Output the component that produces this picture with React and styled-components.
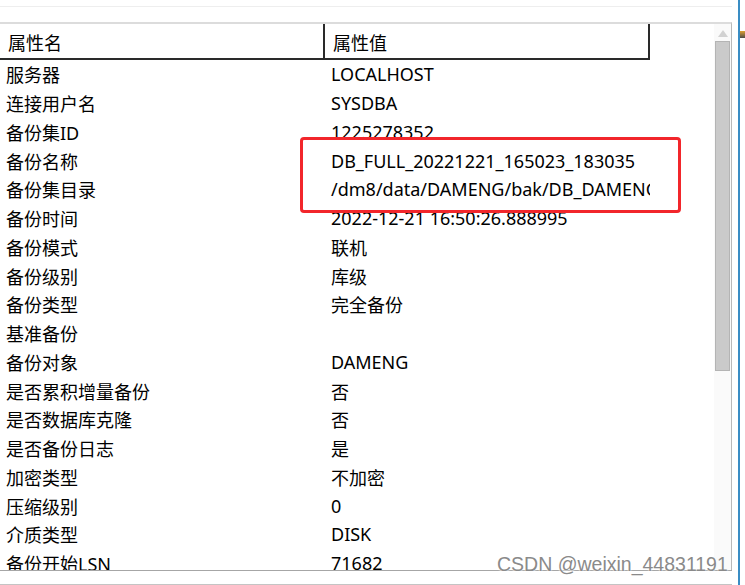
import styled, { createGlobalStyle } from "styled-components"

const GlobalStyle = createGlobalStyle`
    html, body {
        margin: 0;
        padding: 0;
        background: #ffffff;
    }
    body {
        font-family: "Noto Sans", "Noto Sans CJK SC", sans-serif;
        color: #000;
    }
`

const Tela = styled.div`
    position: relative;
    width: 745px;
    height: 585px;
    overflow: hidden;
    display: flex;
    background: #fff;
`

const AreaPrincipal = styled.div`
    width: 732px;
    display: flex;
    flex-direction: column;
`

const FaixaTopo = styled.div`
    height: 6px;
    border-bottom: 1px solid #eeeeee;
    margin-bottom: 15px;
`

const Painel = styled.div`
    height: 546px;
    border-top: 2px solid #dcdcdc;
    border-right: 1px solid #b9b9b9;
    display: flex;
`

const Tabela = styled.div`
    flex: 1;
    overflow: hidden;
`

const Cabecalho = styled.div`
    display: flex;
    width: 650px;
    height: 34px;
    border-bottom: 2px solid #2a2a2a;
`

const CelulaCabecalho = styled.div`
    width: ${(props) => props.$largura}px;
    box-sizing: border-box;
    border-right: 2px solid #2a2a2a;
    padding-left: ${(props) => props.$recuo}px;
    display: flex;
    align-items: center;
    font-size: 18px;
    padding-top: 2px;
`

const Linha = styled.div`
    display: flex;
    width: 650px;
    height: 28.76px;
    align-items: center;
    font-size: 18px;
    &:first-of-type {
        margin-top: 1px;
    }
`

const Celula = styled.div`
    width: ${(props) => props.$largura}px;
    box-sizing: border-box;
    padding-left: ${(props) => props.$recuo}px;
    white-space: nowrap;
    overflow: hidden;
`

const BarraRolagem = styled.div`
    width: 17px;
    display: flex;
    flex-direction: column;
    align-items: center;
    background: #fafafa;
`

const SetaCima = styled.div`
    width: 0;
    height: 0;
    border-left: 5px solid transparent;
    border-right: 5px solid transparent;
    border-bottom: 7px solid #d2d2d2;
    margin: 6px 0 4px;
`

const Polegar = styled.div`
    width: 15px;
    height: 330px;
    box-sizing: border-box;
    background: #cacaca;
    border: 1px solid #b4b4b4;
`

const Rodape = styled.div`
    height: 13px;
    border-top: 1px solid #a6a6a6;
    border-bottom: 1px solid #c4c4c4;
    background: #ffffff;
    position: relative;
    &::after {
        content: "";
        position: absolute;
        left: 0;
        bottom: -3px;
        width: 2px;
        height: 2px;
        background: #000;
    }
`

const BordaDireita = styled.div`
    flex: 1;
    display: flex;
    padding-left: 6px;
`

const LinhaAzul = styled.div`
    width: 2px;
    background: #3a8dc4;
`

const IconeJanela = styled.div`
    margin-top: 31px;
    width: 5px;
    height: 7px;
    background: linear-gradient(#e0a030, #4a4a4a);
`

const Destaque = styled.div`
    position: absolute;
    left: 300px;
    top: 137px;
    width: 381px;
    height: 76px;
    box-sizing: border-box;
    border: 3px solid #f2262b;
    border-radius: 4px;
    pointer-events: none;
`

const MarcaDagua = styled.div`
    position: absolute;
    left: 497px;
    top: 553px;
    font-family: "Liberation Sans", Arial, sans-serif;
    font-size: 19.5px;
    color: #8a8a8a;
    text-shadow: 0 0 2px #fff, 0 0 2px #fff;
    white-space: nowrap;
`

const linhas = [
    ["服务器", "LOCALHOST"],
    ["连接用户名", "SYSDBA"],
    ["备份集ID", "1225278352"],
    ["备份名称", "DB_FULL_20221221_165023_183035"],
    ["备份集目录", "/dm8/data/DAMENG/bak/DB_DAMENG_FULL_2022_12_21_16_50_23"],
    ["备份时间", "2022-12-21 16:50:26.888995"],
    ["备份模式", "联机"],
    ["备份级别", "库级"],
    ["备份类型", "完全备份"],
    ["基准备份", ""],
    ["备份对象", "DAMENG"],
    ["是否累积增量备份", "否"],
    ["是否数据库克隆", "否"],
    ["是否备份日志", "是"],
    ["加密类型", "不加密"],
    ["压缩级别", "0"],
    ["介质类型", "DISK"],
    ["备份开始LSN", "71682"],
    ["备份结束LSN", "71699"],
]

const App = () => {
    return (
        <Tela>
            <GlobalStyle />
            <AreaPrincipal>
                <FaixaTopo />
                <Painel>
                    <Tabela>
                        <Cabecalho>
                            <CelulaCabecalho $largura={325} $recuo={8}>属性名</CelulaCabecalho>
                            <CelulaCabecalho $largura={325} $recuo={8}>属性值</CelulaCabecalho>
                        </Cabecalho>
                        {linhas.map(([nome, valor]) => (
                            <Linha key={nome}>
                                <Celula $largura={325} $recuo={6}>{nome}</Celula>
                                <Celula $largura={325} $recuo={6}>{valor}</Celula>
                            </Linha>
                        ))}
                    </Tabela>
                    <BarraRolagem>
                        <SetaCima />
                        <Polegar />
                    </BarraRolagem>
                </Painel>
                <Rodape />
            </AreaPrincipal>
            <BordaDireita>
                <LinhaAzul />
                <IconeJanela />
            </BordaDireita>
            <Destaque />
            <MarcaDagua>CSDN @weixin_44831191</MarcaDagua>
        </Tela>
    )
}

export default App
